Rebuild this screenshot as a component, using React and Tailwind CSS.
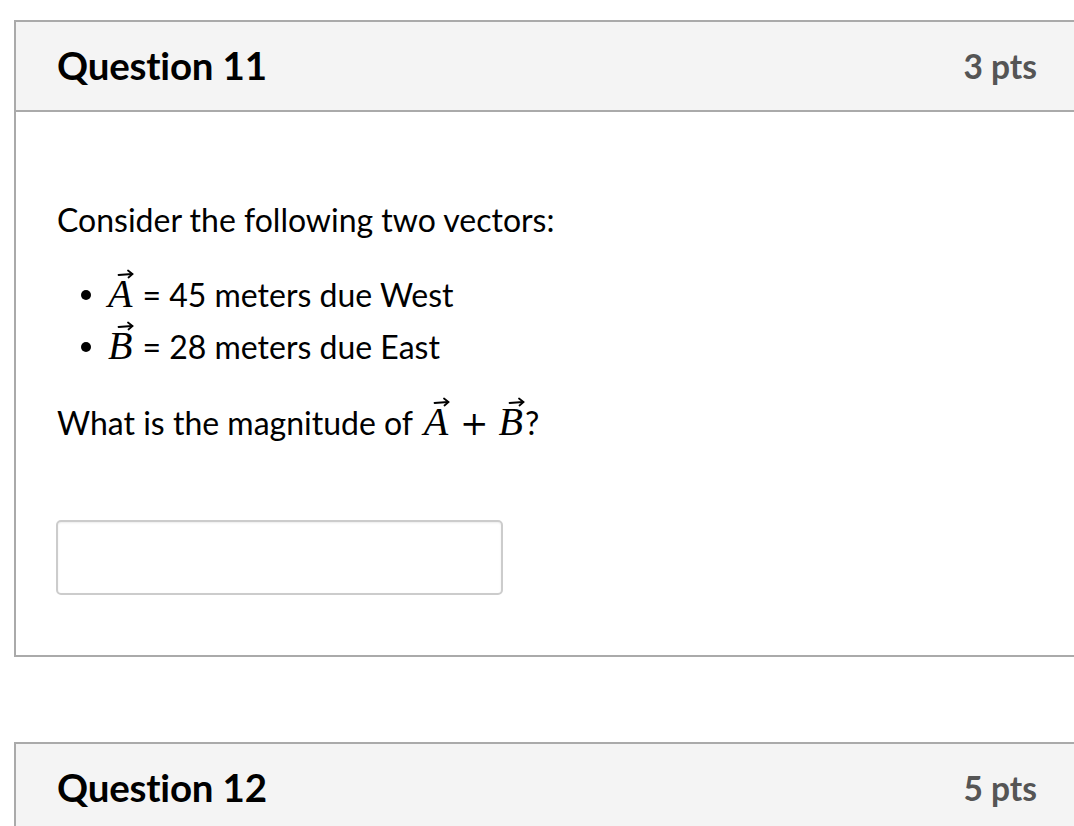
import React from 'react';

const Vec = ({ letter, className = '' }) => (
    <span className={`relative inline-block italic font-['Liberation_Serif','DejaVu_Serif',serif] text-[40px] leading-none pr-[2px] ${className}`}>
        {letter}
        <svg
            className="absolute left-[9px] top-[-5px]"
            width="17"
            height="10"
            viewBox="0 0 17 10"
            fill="none"
            stroke="black"
            strokeWidth="1.8"
            strokeLinecap="round"
        >
            <path d="M1.5 6 L15 5" />
            <path d="M11 1.5 L15.5 5 L11.5 8.5" />
        </svg>
    </span>
);

const QuestionHeader = ({ title, pts }) => (
    <div className="bg-[#f4f4f4] border-b-2 border-[#aaaaaa] h-[90px] flex items-center justify-between pl-[41px] pr-[37px]">
        <h2 className="text-[38.5px] font-bold text-black tracking-[-0.2px]">{title}</h2>
        <span className="text-[33.5px] font-bold text-[#555555]">{pts}</span>
    </div>
);

const App = () => {
    return (
        <div className="min-h-screen bg-white pt-[20px] pl-[14px] font-['Lato','Liberation_Sans',sans-serif] text-black overflow-hidden">
            {/* Question 11 */}
            <div className="border-2 border-r-0 border-[#aaaaaa]">
                <QuestionHeader title="Question 11" pts="3 pts" />
                <div className="h-[543px] pl-[41px] pt-[84px] text-[32px]">
                    <p className="leading-[48px]">Consider the following two vectors:</p>
                    <ul className="mt-[25px] pl-[24px]">
                        <li className="flex items-baseline leading-[52px]">
                            <span className="self-center w-[10px] h-[10px] rounded-full bg-black mr-[17px]"></span>
                            <Vec letter="A" />
                            <span className="ml-[8px]">= 45 meters due West</span>
                        </li>
                        <li className="flex items-baseline leading-[52px]">
                            <span className="self-center w-[10px] h-[10px] rounded-full bg-black mr-[17px]"></span>
                            <Vec letter="B" />
                            <span className="ml-[8px]">= 28 meters due East</span>
                        </li>
                    </ul>
                    <p className="mt-[26px] leading-[48px]">
                        What is the magnitude of <Vec letter="A" className="ml-[3px]" />
                        <span className="font-['DejaVu_Serif',serif] font-light text-[34px] mx-[10px]">+</span>
                        <Vec letter="B" />?
                    </p>
                    <input
                        type="text"
                        className="mt-[73px] ml-[-1px] block w-[447px] h-[75px] rounded-[5px] border-2 border-[#cccccc] bg-white shadow-[inset_0_1px_2px_rgba(0,0,0,0.08)] outline-none"
                    />
                </div>
            </div>

            {/* Question 12 */}
            <div className="mt-[85px] border-2 border-r-0 border-[#aaaaaa]">
                <QuestionHeader title="Question 12" pts="5 pts" />
                <div className="h-[200px]"></div>
            </div>
        </div>
    );
};

export default App;
